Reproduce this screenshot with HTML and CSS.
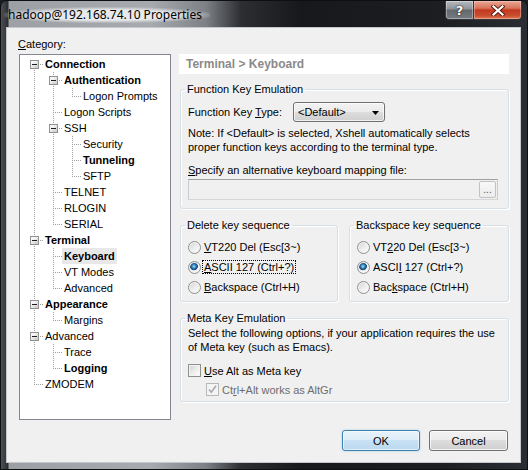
FILE: index.html
```html
<!DOCTYPE html>
<html>
<head>
<meta charset="utf-8">
<title>Properties</title>
<link rel="stylesheet" href="styles.css">
</head>
<body>
<div class="window">
  <div class="titlebar">
    <span class="title">hadoop@192.168.74.10 Properties</span>
    <div class="cbtns">
      <span class="cbtn help">?</span>
      <span class="cbtn close">
        <svg width="14" height="11" viewBox="0 0 14 11">
          <path d="M2.5 1.5L11.5 9.5M11.5 1.5L2.5 9.5" stroke="#5a1a10" stroke-width="4" stroke-linecap="square"/>
          <path d="M2.5 1.5L11.5 9.5M11.5 1.5L2.5 9.5" stroke="#ffffff" stroke-width="2.2" stroke-linecap="square"/>
        </svg>
      </span>
    </div>
  </div>
  <div class="client">
    <div class="main">
      <div class="left">
        <div class="cat-label"><u>C</u>ategory:</div>
        <div class="tree">
          <div class="row"><span class="c first"><span class="box"></span></span><span class="t b">Connection</span></div>
          <div class="row"><span class="g"></span><span class="c mid"><span class="box"></span></span><span class="t b">Authentication</span></div>
          <div class="row"><span class="g"></span><span class="g"></span><span class="c last"></span><span class="t">Logon Prompts</span></div>
          <div class="row"><span class="g"></span><span class="c mid"></span><span class="t">Logon Scripts</span></div>
          <div class="row"><span class="g"></span><span class="c mid"><span class="box"></span></span><span class="t">SSH</span></div>
          <div class="row"><span class="g"></span><span class="g"></span><span class="c mid"></span><span class="t">Security</span></div>
          <div class="row"><span class="g"></span><span class="g"></span><span class="c mid"></span><span class="t b">Tunneling</span></div>
          <div class="row"><span class="g"></span><span class="g"></span><span class="c last"></span><span class="t">SFTP</span></div>
          <div class="row"><span class="g"></span><span class="c mid"></span><span class="t">TELNET</span></div>
          <div class="row"><span class="g"></span><span class="c mid"></span><span class="t">RLOGIN</span></div>
          <div class="row"><span class="g"></span><span class="c last"></span><span class="t">SERIAL</span></div>
          <div class="row"><span class="c mid"><span class="box"></span></span><span class="t b">Terminal</span></div>
          <div class="row"><span class="g"></span><span class="c mid"></span><span class="t b sel">Keyboard</span></div>
          <div class="row"><span class="g"></span><span class="c mid"></span><span class="t">VT Modes</span></div>
          <div class="row"><span class="g"></span><span class="c last"></span><span class="t">Advanced</span></div>
          <div class="row"><span class="c mid"><span class="box"></span></span><span class="t b">Appearance</span></div>
          <div class="row"><span class="g"></span><span class="c last"></span><span class="t">Margins</span></div>
          <div class="row"><span class="c mid"><span class="box"></span></span><span class="t">Advanced</span></div>
          <div class="row"><span class="g"></span><span class="c mid"></span><span class="t">Trace</span></div>
          <div class="row"><span class="g"></span><span class="c last"></span><span class="t b">Logging</span></div>
          <div class="row"><span class="c last"></span><span class="t">ZMODEM</span></div>
        </div>
      </div>
      <div class="right">
        <div class="header">Terminal &gt; Keyboard</div>

        <fieldset class="group fk">
          <legend>Function Key Emulation</legend>
          <div class="fk-row">
            <span class="fk-label">Function Key <u>T</u>ype:</span>
            <span class="combo"><span class="combo-text">&lt;Default&gt;</span>
              <svg class="arrow" width="7" height="4" viewBox="0 0 7 4"><path d="M0 0H7L3.5 4Z" fill="#000"/></svg>
            </span>
          </div>
          <div class="note">Note: If &lt;Default&gt; is selected, Xshell automatically selects proper function keys according to the terminal type.</div>
          <div class="spec"><u>S</u>pecify an alternative keyboard mapping file:</div>
          <div class="path"><span class="browse">...</span></div>
        </fieldset>

        <div class="pair">
          <fieldset class="group del">
            <legend>Delete key sequence</legend>
            <div class="opt"><span class="radio"></span><span><u>V</u>T220 Del (Esc[3~)</span></div>
            <div class="opt"><span class="radio on"></span><span class="focus"><u>A</u>SCII 127 (Ctrl+?)</span></div>
            <div class="opt"><span class="radio"></span><span><u>B</u>ackspace (Ctrl+H)</span></div>
          </fieldset>
          <fieldset class="group bs">
            <legend>Backspace key sequence</legend>
            <div class="opt"><span class="radio"></span><span>VT<u>2</u>20 Del (Esc[3~)</span></div>
            <div class="opt"><span class="radio on"></span><span>ASCI<u>I</u> 127 (Ctrl+?)</span></div>
            <div class="opt"><span class="radio"></span><span>Bac<u>k</u>space (Ctrl+H)</span></div>
          </fieldset>
        </div>

        <fieldset class="group meta">
          <legend>Meta Key Emulation</legend>
          <div class="note">Select the following options, if your application requires the use of Meta key (such as Emacs).</div>
          <div class="chk-row first-chk"><span class="check"></span><span><u>U</u>se Alt as Meta key</span></div>
          <div class="chk-row sub disabled"><span class="check dis">
            <svg width="11" height="11" viewBox="0 0 11 11"><path d="M2 5.5L4.3 8.3L9 1.8" fill="none" stroke="#a9a9a9" stroke-width="1.6"/></svg>
          </span><span>Ct<u>r</u>l+Alt works as AltGr</span></div>
        </fieldset>
      </div>
    </div>
    <div class="buttons">
      <span class="btn default">OK</span>
      <span class="btn cancel">Cancel</span>
    </div>
  </div>
</div>
</body>
</html>
```

FILE: styles.css
```css
html, body {
  margin: 0;
  padding: 0;
  background: #1b1c1f;
}

.window {
  width: 528px;
  height: 470px;
  box-sizing: border-box;
  display: flex;
  flex-direction: column;
  border-radius: 7px 7px 0 0;
  border: 1px solid #0e0f11;
  background:
    linear-gradient(90deg, #4c4f54 0, #3a3d41 4px, #2a2c30 7px, rgba(0,0,0,0) 8px),
    linear-gradient(90deg, #9c9fa3 0, #a7aaae 150px, #7d8085 205px, #2c2e32 240px, #17181b 300px, #1c1e22 440px, #2a2d32 100%);
  overflow: hidden;
}

.titlebar {
  height: 27px;
  display: flex;
  align-items: flex-start;
  flex: none;
}

.title {
  font-family: "Noto Sans", "Open Sans", sans-serif;
  font-size: 12px;
  line-height: 16px;
  color: #000;
  margin-top: 6px;
  margin-left: 3px;
  padding: 0 8px 0 4px;
  border-radius: 8px;
  background: radial-gradient(ellipse at center, rgba(235,237,239,0.95) 45%, rgba(210,212,215,0) 75%);
}

.cbtns {
  display: flex;
  margin-left: auto;
  margin-right: 5px;
  height: 20px;
}

.cbtn {
  height: 19px;
  box-sizing: border-box;
  border: 1px solid #34373c;
  border-top: none;
  display: flex;
  align-items: center;
  justify-content: center;
}

.help {
  width: 28px;
  border-right: none;
  border-radius: 0 0 0 4px;
  background: linear-gradient(180deg, #b6babf 0, #8e9399 45%, #64696f 50%, #767b81 100%);
  color: #fff;
  font-family: "DejaVu Sans", sans-serif;
  font-weight: bold;
  font-size: 13px;
  text-shadow: 0 0 2px #222, 0 0 1px #000;
  box-shadow: inset 0 0 0 1px rgba(255,255,255,0.35);
}

.close {
  width: 49px;
  border-radius: 0 0 4px 0;
  background: linear-gradient(180deg, #e9a995 0, #d8735a 40%, #c2391e 50%, #c84d2f 80%, #e07a55 100%);
  box-shadow: inset 0 0 0 1px rgba(255,220,210,0.4);
}

.client {
  flex: 1;
  margin: 0 7px 7px 6px;
  background: #f0f0f0;
  box-shadow: 0 0 0 1px #c4c8cc;
  display: flex;
  flex-direction: column;
  font-family: "Liberation Sans", Arial, sans-serif;
  font-size: 11px;
  color: #000;
}

.main {
  display: flex;
  padding: 9px 0 0 12px;
}

.left {
  width: 152px;
  flex: none;
}

.cat-label {
  line-height: 14px;
  margin-left: -1px;
}

.tree {
  margin-top: 3px;
  height: 366px;
  box-sizing: border-box;
  border: 1px solid #828790;
  background: #fff;
  padding: 1px 0 0 5px;
}

.row {
  display: flex;
  height: 16px;
}

.g, .c {
  width: 19px;
  height: 16px;
  flex: none;
  background-repeat: no-repeat;
}

.g {
  background-image: repeating-linear-gradient(180deg, #a0a0a0 0 1px, transparent 1px 2px);
  background-size: 1px 16px;
  background-position: 9px 0;
}

.c {
  background-image:
    repeating-linear-gradient(90deg, #a0a0a0 0 1px, transparent 1px 2px),
    repeating-linear-gradient(180deg, #a0a0a0 0 1px, transparent 1px 2px);
  background-size: 10px 1px, 1px 16px;
  background-position: 9px 8px, 9px 0;
}

.c.last {
  background-size: 10px 1px, 1px 9px;
}

.c.first {
  background-size: 10px 1px, 1px 8px;
  background-position: 9px 8px, 9px 8px;
}

.box {
  display: block;
  width: 9px;
  height: 9px;
  box-sizing: border-box;
  margin: 4px 0 0 5px;
  border: 1px solid #919191;
  background:
    linear-gradient(#1e1e1e, #1e1e1e) center / 5px 1px no-repeat,
    linear-gradient(135deg, #ffffff 0, #f0f0f0 40%, #c8c8c8 100%);
}

.t {
  line-height: 16px;
  padding: 0 2px;
  margin-left: -1px;
  white-space: nowrap;
}

.t.b {
  font-weight: bold;
}

.t.sel {
  background: #e8e8e8;
}

.right {
  width: 330px;
  margin-left: 8px;
  margin-top: 17px;
  flex: none;
}

.header {
  height: 20px;
  line-height: 20px;
  background: #fff;
  color: #8a8a8a;
  font-weight: bold;
  font-size: 12px;
  padding-left: 7px;
}

.group {
  margin: 9px 0 0 1px;
  padding: 0 6px 0 7px;
  border: 1px solid #d5dfe5;
  border-radius: 3px;
  box-shadow: inset 1px 1px 0 #fff, 1px 1px 0 #fff;
  min-width: 0;
  box-sizing: border-box;
}

.group legend {
  padding: 0 2px;
  margin-left: -3px;
  line-height: 14px;
  font-size: 11px;
}

.fk {
  margin-top: 8px;
  width: 329px;
  padding-bottom: 8px;
}

.fk-row {
  margin-top: 6px;
  height: 20px;
  display: flex;
  align-items: center;
}

.fk-label {
  width: 105px;
  flex: none;
}

.combo {
  width: 92px;
  height: 20px;
  box-sizing: border-box;
  border: 1px solid #707070;
  border-radius: 3px;
  background: linear-gradient(180deg, #f2f2f2 0, #ebebeb 50%, #dddddd 50%, #cfcfcf 100%);
  box-shadow: inset 0 0 0 1px rgba(255,255,255,0.7);
  display: flex;
  align-items: center;
  padding: 0 5px 0 4px;
}

.combo-text {
  flex: 1;
}

.arrow {
  display: block;
  margin-top: 1px;
}

.note {
  line-height: 14px;
  margin-top: 4px;
}

.spec {
  line-height: 14px;
  margin-top: 9px;
}

.path {
  margin-top: 2px;
  width: 310px;
  height: 21px;
  box-sizing: border-box;
  border: 1px solid #abadb3;
  border-color: #9ea0a6 #c9cbd0 #d4d6da #c9cbd0;
  background: #f0f0f0;
  display: flex;
  justify-content: flex-end;
  padding: 1px;
}

.browse {
  width: 17px;
  height: 17px;
  box-sizing: border-box;
  border: 1px solid #c2c2c2;
  border-radius: 2px;
  background: linear-gradient(180deg, #f8f8f8, #ececec);
  line-height: 16px;
  text-align: center;
  font-size: 10px;
  color: #555;
}

.pair {
  display: flex;
  gap: 11px;
  margin-left: 1px;
  margin-top: 9px;
}

.pair .group {
  margin: 0;
  padding-bottom: 4px;
}

.del {
  width: 158px;
}

.bs {
  width: 160px;
}

.opt {
  height: 20px;
  display: flex;
  align-items: center;
  white-space: nowrap;
}

.opt:first-of-type {
  margin-top: 5px;
}

.radio {
  width: 13px;
  height: 13px;
  box-sizing: border-box;
  border-radius: 50%;
  border: 1px solid #8e8f8f;
  background: linear-gradient(135deg, #d2d2d2 0, #ececec 50%, #ffffff 100%);
  box-shadow: inset 0 0 0 1px #f4f4f4;
  margin-right: 3px;
  flex: none;
}

.radio.on {
  background:
    radial-gradient(circle at 45% 40%, #b9e4fb 0, #5aa6d6 1.2px, #24639a 2.6px, #1a4c7a 3.6px, rgba(26,76,122,0) 4.2px),
    linear-gradient(135deg, #d2d2d2 0, #ececec 50%, #ffffff 100%);
}

.focus {
  outline: 1px dotted #000;
  outline-offset: 0;
  padding: 0 1px;
  margin-left: -1px;
}

.meta {
  width: 329px;
  padding-bottom: 2px;
}

.meta .note {
  margin-top: 1px;
}

.chk-row {
  height: 19px;
  display: flex;
  align-items: center;
  white-space: nowrap;
}

.first-chk {
  margin-top: 7px;
}

.chk-row.sub {
  padding-left: 18px;
}

.chk-row.disabled {
  color: #6d6d6d;
}

.check {
  width: 13px;
  height: 13px;
  box-sizing: border-box;
  border: 1px solid #8e8f8f;
  background: linear-gradient(135deg, #cfcfcf 0, #ebebeb 50%, #ffffff 100%);
  box-shadow: inset 0 0 0 1px #f4f4f4;
  margin-right: 3px;
  flex: none;
  display: flex;
  align-items: center;
  justify-content: center;
}

.check.dis {
  border-color: #b8b8b8;
  background: #f4f4f4;
  box-shadow: none;
}

.check svg {
  display: block;
}

.buttons {
  display: flex;
  justify-content: flex-end;
  gap: 9px;
  margin-top: 10px;
  padding-right: 12px;
}

.btn {
  height: 21px;
  box-sizing: border-box;
  border: 1px solid #707070;
  border-radius: 3px;
  background: linear-gradient(180deg, #f2f2f2 0, #ebebeb 50%, #dddddd 50%, #cfcfcf 100%);
  box-shadow: inset 0 0 0 1px rgba(255,255,255,0.75);
  display: flex;
  align-items: center;
  justify-content: center;
}

.btn.default {
  width: 78px;
  border-color: #3c7fb1;
  background: linear-gradient(180deg, #e8f3fb 0, #dcecf8 50%, #c8e1f4 50%, #bcd9f0 100%);
  box-shadow: inset 0 0 0 1px rgba(255,255,255,0.6), 0 0 2px rgba(80,160,220,0.5);
}

.btn.cancel {
  width: 79px;
}
```
